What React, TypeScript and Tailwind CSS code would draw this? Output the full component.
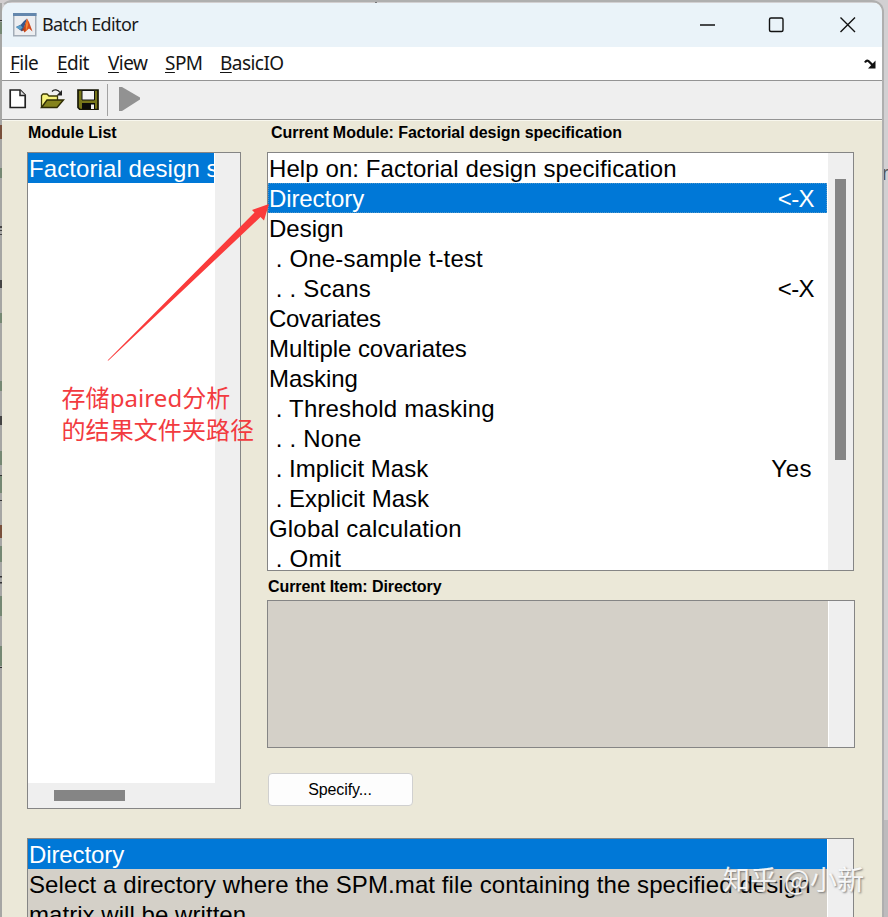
import React from "react";

type Row = { label: string; value?: string; selected?: boolean; tracking: string };

const rows: Row[] = [
  { label: "Help on: Factorial design specification", tracking: "tracking-[0.09px]" },
  { label: "Directory", value: "<-X", selected: true, tracking: "tracking-[-0.1px]" },
  { label: "Design", tracking: "tracking-[0px]" },
  { label: " . One-sample t-test", tracking: "tracking-[0.16px]" },
  { label: " . . Scans", value: "<-X", tracking: "tracking-[0.2px]" },
  { label: "Covariates", tracking: "tracking-[-0.3px]" },
  { label: "Multiple covariates", tracking: "tracking-[-0.05px]" },
  { label: "Masking", tracking: "tracking-[-0.1px]" },
  { label: " . Threshold masking", tracking: "tracking-[0.17px]" },
  { label: " . . None", tracking: "tracking-[0.2px]" },
  { label: " . Implicit Mask", value: "Yes", tracking: "tracking-[0.04px]" },
  { label: " . Explicit Mask", tracking: "tracking-[0px]" },
  { label: "Global calculation", tracking: "tracking-[0.18px]" },
  { label: " . Omit", tracking: "tracking-[0.2px]" },
];

const menus = [
  { label: "File", width: "w-[47px]" },
  { label: "Edit", width: "w-[51px]" },
  { label: "View", width: "w-[57px]" },
  { label: "SPM", width: "w-[55px]" },
  { label: "BasicIO", width: "w-[70px]" },
];

function MatlabIcon() {
  return (
    <svg width="24" height="24" viewBox="0 0 24 24" className="shrink-0">
      <defs>
        <linearGradient id="peak" x1="0" x2="1">
          <stop offset="0" stopColor="#7a2a1c" />
          <stop offset=".45" stopColor="#e8571d" />
          <stop offset="1" stopColor="#c2401c" />
        </linearGradient>
      </defs>
      <rect x=".75" y=".75" width="22" height="22" fill="#eceef1" stroke="#a3adb8" strokeWidth="1.5" />
      <rect x="0" y="0" width="23.5" height="3" fill="#6487ad" />
      <path d="m3 14 5-2.500L11 8l3-2.500-2.500 8L9 18.500Z" fill="#37598f" />
      <path d="m3 14 4.500-2 2 2.500-2.500 2.500Z" fill="#5b9fc9" />
      <path d="m8.500 18 2.500-4L14 5.500l2 3.500 3.500 9.500-3.500-3-4.500 4-1-2Z" fill="url(#peak)" />
      <path d="m13 12 1.200-5.500L15 12l-2 6Z" fill="#f58a35" />
    </svg>
  );
}

function NewIcon() {
  return (
    <svg width="18" height="20" viewBox="0 0 18 20">
      <path d="M1.200 1h10l5 5v12.500h-15Z" fill="#fff" stroke="#222" strokeWidth="1.7" />
      <path d="M11 1v5.500h5.500" fill="#ddd" stroke="#222" strokeWidth="1.5" />
    </svg>
  );
}

function OpenIcon() {
  return (
    <svg width="25" height="20" viewBox="0 0 25 20">
      <path d="M1.500 18.500V6.500l1.500-1.500h4l2 2h8.500v4" fill="#f6f27c" stroke="#3b3905" strokeWidth="1.3" />
      <path d="m1.500 18.500 5.500-7.500h16.500l-6.500 7.500Z" fill="#85831c" stroke="#2e2c04" strokeWidth="1.4" />
      <path d="M12 2.500c2-2.500 6-2 8 1" fill="none" stroke="#222" strokeWidth="1.300" />
      <path d="M22 1v5.500h-5.500Z" fill="#222" />
    </svg>
  );
}

function SaveIcon() {
  return (
    <svg width="22" height="21" viewBox="0 0 22 21">
      <path d="M1 1h20v19.500H3l-2-2Z" fill="#77761a" stroke="#171706" strokeWidth="1.7" />
      <path d="M5 1.500h12.500v9.500H5Z" fill="#f3f3f3" stroke="#111" />
      <path d="M5 14h13v6H5Z" fill="#0d0d0a" />
      <path d="M14 15.500h3V20h-3Z" fill="#eee" />
    </svg>
  );
}

function TitleBar() {
  return (
    <header className="flex h-[44px] shrink-0 items-center bg-[#eaf3f9] pb-px pl-[11px]">
      <MatlabIcon />
      <span className="ml-[5px] w-[97px] whitespace-nowrap font-['Noto_Sans',sans-serif] text-[18px] tracking-[-0.6px] text-[#1b1b1b]">
        Batch Editor
      </span>
      <svg className="ml-auto mr-[25px]" width="158" height="18" viewBox="0 0 158 18" fill="none" stroke="#111" strokeWidth="1.4">
        <path d="M1 9h15" />
        <rect x="70.500" y="2" width="13.500" height="13.500" rx="1.500" />
        <path d="m141.500 1.500 14.500 14.500m0-14.500-14.500 14.500" />
      </svg>
    </header>
  );
}

function MenuBar() {
  return (
    <nav className="flex h-[33px] shrink-0 items-center bg-white pl-[8px] font-['Noto_Sans',sans-serif] text-[19px] tracking-[-0.55px] text-[#151515]">
      {menus.map((menu) => (
        <span key={menu.label} className={`${menu.width} whitespace-nowrap`}>
          <span className="underline decoration-1 underline-offset-[2px]">{menu.label[0]}</span>
          {menu.label.slice(1)}
        </span>
      ))}
      <svg className="ml-auto mr-[5px] mt-px" width="13" height="11" viewBox="0 0 13 11">
        <path d="M1 3.500Q3 0 5.500 3L9 6.500" fill="none" stroke="#111" strokeWidth="2.300" />
        <path d="M11.500 1.500v8H4Z" fill="#111" />
      </svg>
    </nav>
  );
}

function ToolBar() {
  return (
    <div className="flex h-[40px] shrink-0 items-center border-y border-[#949494] bg-[#efefef] pb-[2px] pl-[7px]">
      <NewIcon />
      <span className="ml-[13px]"><OpenIcon /></span>
      <span className="ml-[12px]"><SaveIcon /></span>
      <span className="ml-[8px] mt-[2px] h-[32px] w-px bg-[#a2a2a2]" />
      <svg className="ml-[11px]" width="22" height="24" viewBox="0 0 22 24">
        <path d="M0 0h3l18 10.500v2L3 24H0Z" fill="#929292" />
      </svg>
    </div>
  );
}

function ListText({ children, className = "" }: { children: React.ReactNode; className?: string }) {
  return <div className={`h-[30px] shrink-0 whitespace-pre pl-px text-[24px] leading-[31px] ${className}`}>{children}</div>;
}

function ModuleList() {
  return (
    <section className="w-[214px] shrink-0">
      <h2 className="h-[31px] pl-px text-[16px] font-bold leading-[23px] tracking-[-0.02px]">Module List</h2>
      <div className="flex h-[657px] flex-col border border-[#858585] bg-[#efefef]">
        <div className="h-[630px] w-[187px] overflow-hidden bg-white">
          <ListText className="w-[186px] overflow-hidden bg-[#0078d7] tracking-[0.09px] text-white">Factorial design specification</ListText>
        </div>
        <div className="ml-[26px] mt-[7px] h-[11px] w-[71px] bg-[#858585]" />
      </div>
    </section>
  );
}

function CurrentModule() {
  return (
    <section className="w-[588px] shrink-0">
      <h2 className="h-[31px] whitespace-nowrap pl-[4px] text-[16px] font-bold leading-[23px] tracking-[-0.045px]">
        Current Module: Factorial design specification
      </h2>
      <div className="flex h-[419px] w-[587px] border border-[#858585] bg-[#efefef]">
        <div className="w-[560px] overflow-hidden bg-white">
          {rows.map((row) => (
            <ListText
              key={row.label}
              className={`flex w-[559px] justify-between ${row.selected ? "bg-[#0078d7] text-white outline-1 -outline-offset-1 outline-dotted outline-[#4d95c8]" : ""}`}
            >
              <span className={row.tracking}>{row.label}</span>
              {row.value && (
                <span className={row.value === "Yes" ? "mr-[15px] tracking-[0.5px]" : "mr-[13px] tracking-[-0.6px]"}>{row.value}</span>
              )}
            </ListText>
          ))}
        </div>
        <div className="ml-[7px] mt-[26px] h-[281px] w-[11px] bg-[#858585]" />
      </div>
      <h2 className="h-[29px] pl-px text-[16px] font-bold leading-[31px] tracking-[-0.07px]">Current Item: Directory</h2>
      <div className="flex h-[148px] border border-[#858585] bg-[#efefef]">
        <div className="w-[561px] border-r border-white bg-[#d4d0c8]" />
      </div>
      <button className="ml-px mt-[25px] flex h-[33px] w-[145px] items-center justify-center rounded-[4px] border border-[#d0d0d0] bg-[#fdfdfd] pr-px pt-px text-[16px] tracking-[-0.1px]">
        Specify...
      </button>
    </section>
  );
}

function HelpPanel() {
  return (
    <section className="ml-[25px] mt-[29px] flex h-[90px] w-[827px] shrink-0 border border-[#858585] bg-[#efefef]">
      <div className="w-[800px] border-r border-white bg-[#d4d0c8]">
        <ListText className="w-[799px] bg-[#0078d7] tracking-[-0.1px] text-white">Directory</ListText>
        <ListText className="tracking-[0.09px]">Select a directory where the SPM.mat file containing the specified design</ListText>
        <ListText className="tracking-[0.05px]">matrix will be written.</ListText>
      </div>
    </section>
  );
}

function BackdropEdge() {
  return (
    <svg className="absolute left-0 top-0" width="888" height="917" viewBox="0 0 888 917">
      <path d="M0 0h376v3H0Z" fill="#d2cecf" />
      <path d="M375 0h2v3h-2Z" fill="#77777a" />
      <path d="M0 20h2v1H0ZM0 475h2v1H0Zm0 25h2v1H0Zm0 76h2v1.500H0Zm0 6h2v1.500H0Zm0 85h2v1H0Z" fill="#333" />
      <path d="M0 22h2v12H0Zm0 146h2v10H0Zm0 145h2v10H0Zm0 68h2v10H0Zm0 70h2v14H0Zm0 25h2v17H0Zm0 70h2v16H0Zm0 50h2v20H0Zm0 50h2v20H0Z" fill="#758873" />
      <path d="M0 525h2v13H0ZM0 125h2v14H0Z" fill="#79503b" />
      <path d="M0 226h2v2H0Zm0 4h2v1H0Zm0 4h2v1H0Zm0 46h2v8H0Zm0 136h2v9H0Z" fill="#444" />
      <path d="M883 820h5v97h-5Z" fill="#bdbbbd" />
    </svg>
  );
}

export default function App() {
  return (
    <main className="relative h-[917px] w-[888px] overflow-hidden bg-[#d2d0d2] font-['Liberation_Sans',Arial,sans-serif] text-black">
      <div className="absolute inset-y-0 left-0 w-[2px] bg-[#a6a6a4]" />
      <BackdropEdge />
      <span className="absolute left-[882px] top-[158px] text-[20px] text-[#555]">r</span>
      <div className="relative h-[930px] w-[884px] overflow-hidden rounded-t-[12px] border-2 border-[#afafaf] border-l-transparent bg-clip-padding pt-px">
        <div className="flex h-full flex-col bg-[#ebe8d8]">
          <TitleBar />
          <MenuBar />
          <ToolBar />
          <div className="flex shrink-0 gap-[26px] border-t border-[#f8f7ee] pl-[25px]">
            <ModuleList />
            <CurrentModule />
          </div>
          <HelpPanel />
        </div>
      </div>
      <svg className="absolute left-0 top-0" width="300" height="370" viewBox="0 0 300 370">
        <path d="M107.500 360.500 254.500 212.500 252 210 269 204 264 220.500 260.500 217 108.500 360.500Z" fill="#fa3b3b" />
      </svg>
      <div className="absolute left-[61.5px] top-[382px] whitespace-nowrap font-['Noto_Sans','Noto_Sans_CJK_SC',sans-serif] text-[24px] leading-[32px] tracking-[0.08px] text-[#f23b3f]">
        存储paired分析
        <br />
        的结果文件夹路径
      </div>
      <div className="absolute left-[723px] top-[859px] whitespace-nowrap font-['Noto_Sans_CJK_SC',sans-serif] text-[27px] leading-[40px] tracking-[0.35px] text-white/90 [text-shadow:1px_1px_2px_#777]">
        知乎 @小新
      </div>
    </main>
  );
}
